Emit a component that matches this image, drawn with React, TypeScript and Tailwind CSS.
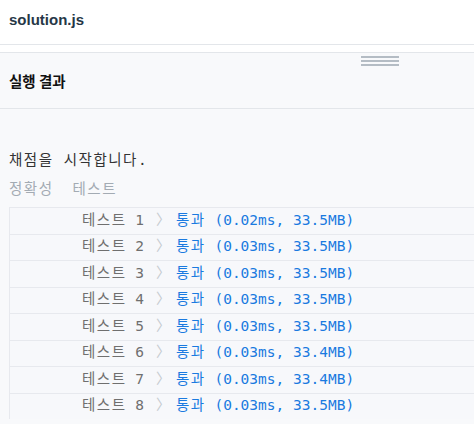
const MONO = "font-['DejaVu_Sans_Mono','Noto_Sans_CJK_KR',monospace]";

const results = [
  { n: 1, time: '0.02ms', mem: '33.5MB' },
  { n: 2, time: '0.03ms', mem: '33.5MB' },
  { n: 3, time: '0.03ms', mem: '33.5MB' },
  { n: 4, time: '0.03ms', mem: '33.5MB' },
  { n: 5, time: '0.03ms', mem: '33.5MB' },
  { n: 6, time: '0.03ms', mem: '33.4MB' },
  { n: 7, time: '0.03ms', mem: '33.4MB' },
  { n: 8, time: '0.03ms', mem: '33.5MB' },
];

export default function App() {
  return (
    <div className="w-[474px] h-[424px] overflow-hidden bg-white font-['Noto_Sans','Noto_Sans_CJK_KR',sans-serif]">
      {/* file tab */}
      <div className="h-[45px] border-b border-[#e3e6ea] px-[9px] pt-[7px]">
        <span className="text-[15px] leading-[20px] font-bold text-[#263747] font-['Liberation_Sans',sans-serif]">solution.js</span>
      </div>

      <div className="mt-[7px] border-t border-[#e3e6ea] bg-[#f8f9fb] h-[372px]">
        {/* panel header */}
        <div className="relative h-[56px] border-b border-[#e3e6ea] px-[9px] flex items-center">
          <div className="absolute left-[361px] top-[3px] w-[38px] flex flex-col gap-[2px]">
            <div className="h-[2px] bg-[#b4bcc4]" />
            <div className="h-[2px] bg-[#b4bcc4]" />
            <div className="h-[2px] bg-[#b4bcc4]" />
          </div>
          <span className="text-[14.5px] font-bold text-[#111] font-['Noto_Sans_CJK_KR',sans-serif] mt-[1px]">실행 결과</span>
        </div>

        {/* output */}
        <div className={`${MONO} text-[14.5px] pl-[9px] pt-[41px]`}>
          <div className="leading-[20px] text-[#333] whitespace-pre tracking-[1.5px]">채점을 시작합니다.</div>
          <div className="mt-[9px] leading-[20px] text-[#a3abb3] flex gap-[19px] tracking-[1.5px]">
            <span>정확성</span>
            <span>테스트</span>
          </div>
          <div className="mt-[8px] border-l border-[#e7e9ee]">
            {results.map((r) => (
              <div
                key={r.n}
                className="flex items-center h-[26.5px] border-t border-[#e7e9ee] bg-[#f7f8fb] whitespace-pre"
              >
                <span className="w-[134px] text-right text-[#6f6f6f]">
                  <span className="tracking-[1.5px]">테스트</span> {r.n}
                </span>
                <span className="w-[32px] pl-[12px] text-[#c5cad0]">〉</span>
                <span className="text-[#1a7ae0]">
                  <span className="tracking-[1.5px]">통과</span> ({r.time}, {r.mem})
                </span>
              </div>
            ))}
          </div>
        </div>
      </div>
    </div>
  );
}
